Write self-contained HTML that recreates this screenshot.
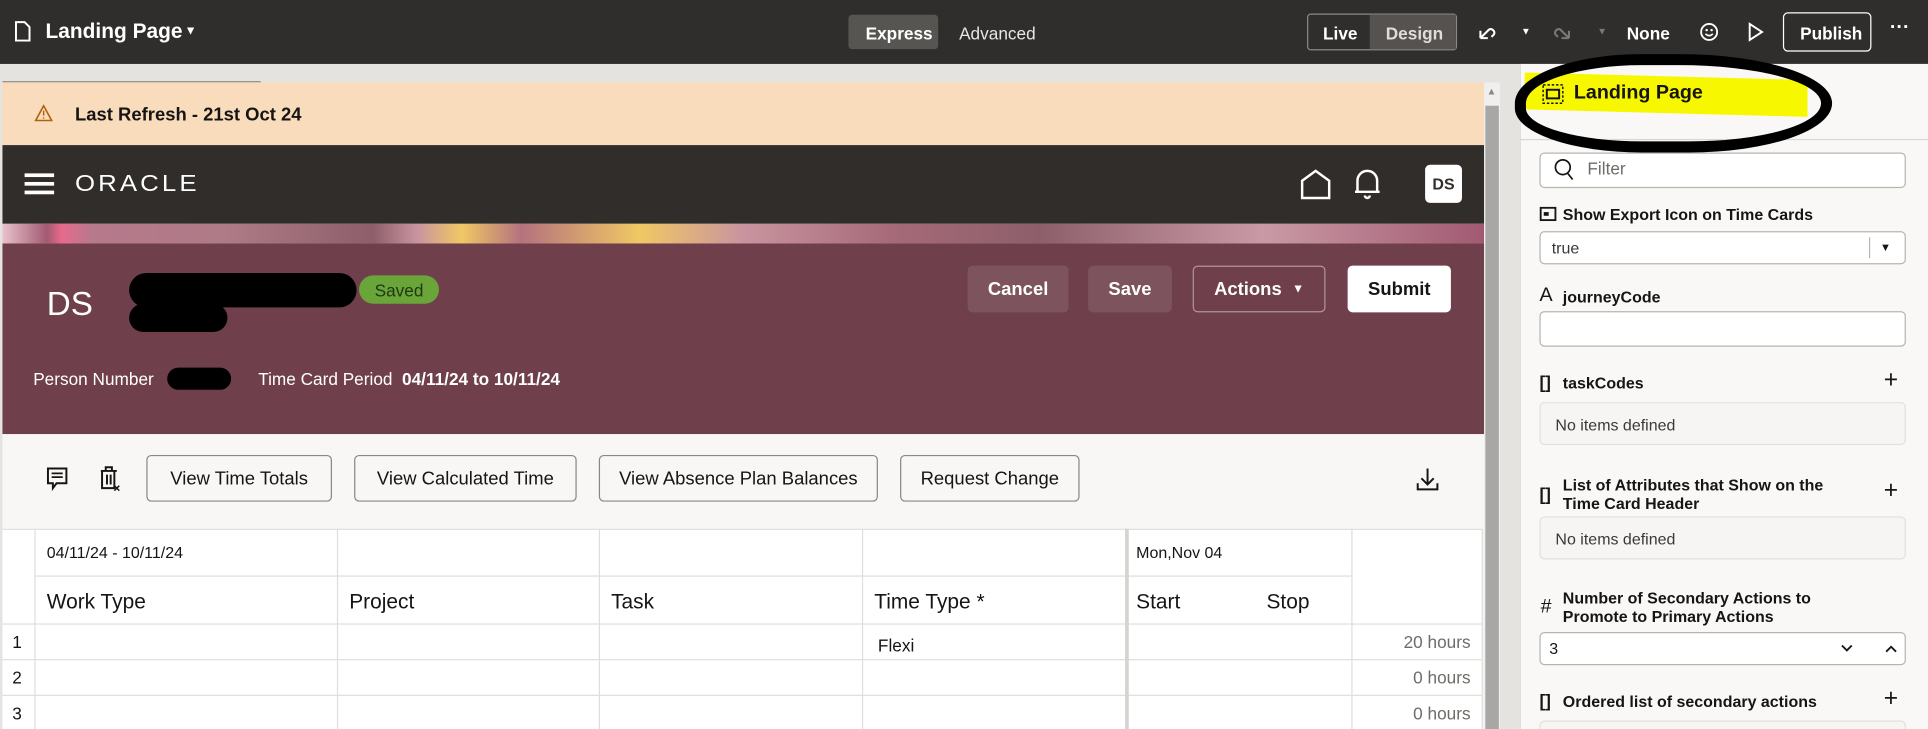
<!DOCTYPE html>
<html><head><meta charset="utf-8"><style>
html,body{margin:0;padding:0;width:1928px;height:729px;overflow:hidden;background:#fff}
#w{position:absolute;left:0;top:0;width:1568px;height:593px;transform:scale(1.22959);transform-origin:0 0;font-family:"Liberation Sans",sans-serif;overflow:hidden;background:#e5e3df}
.a{position:absolute}
.t{position:absolute;white-space:nowrap}
.btn{position:absolute;box-sizing:border-box;border:1px solid #8a8886;border-radius:4px;background:#f8f7f5;font-size:15px;color:#161513;display:flex;align-items:center;justify-content:center}
.vl{position:absolute;top:430px;height:163px;width:1px;background:#e0dedb}
.hl{position:absolute;height:1px;background:#e0dedb}
.lbl{position:absolute;font-size:13px;font-weight:bold;color:#161513;white-space:nowrap}
.box{position:absolute;left:1252px;width:298px;box-sizing:border-box;border:1px solid #b8b5b0;border-radius:4px;background:#fff}
.nob{position:absolute;left:1252px;width:298px;box-sizing:border-box;border:1px solid #e3e1dd;border-radius:4px;background:#f6f5f3;font-size:13px;color:#3b3936;padding:10px 0 0 12px}
.plus{position:absolute;left:1532px;font-size:20px;color:#161513}
</style></head><body><div id="w">
<!-- top bar -->
<div class="a" style="left:0;top:0;width:1568px;height:52px;background:#302e2c"></div>
<svg class="a" style="left:12px;top:17px" width="13" height="17"><path d="M1 1h7l4 4v11H1z" fill="none" stroke="#fff" stroke-width="1.6"/></svg>
<div class="t" style="left:37px;top:16px;font-size:17px;font-weight:bold;color:#fff">Landing Page</div>
<div class="t" style="left:150px;top:20px;font-size:10px;color:#fff">▼</div>
<div class="a" style="left:690px;top:12px;width:73px;height:28px;background:#575552;border-radius:3px"></div>
<div class="t" style="left:704px;top:19px;font-size:14px;font-weight:bold;color:#fff">Express</div>
<div class="t" style="left:780px;top:19px;font-size:14px;color:#e8e6e3">Advanced</div>
<div class="a" style="left:1063px;top:11px;width:122px;height:30px;box-sizing:border-box;border:1px solid #8a8886;border-radius:3px"></div>
<div class="a" style="left:1114px;top:12px;width:70px;height:28px;background:#55524f"></div>
<div class="t" style="left:1076px;top:19px;font-size:14px;font-weight:bold;color:#fff">Live</div>
<div class="t" style="left:1127px;top:19px;font-size:14px;font-weight:bold;color:#e0ddd9">Design</div>
<svg class="a" style="left:1201px;top:18px" width="16" height="16"><path d="M3 13L3 7M3 13h6M3 13L10 6a3 3 0 014 4l-2 2" fill="none" stroke="#fff" stroke-width="1.7"/></svg>
<div class="t" style="left:1237px;top:21px;font-size:8px;color:#fff">▼</div>
<svg class="a" style="left:1263px;top:18px" width="16" height="16"><path d="M13 13V7M13 13H7M13 13L6 6a3 3 0 00-4 4l2 2" fill="none" stroke="#7a7875" stroke-width="1.7"/></svg>
<div class="t" style="left:1299px;top:21px;font-size:8px;color:#7a7875">▼</div>
<div class="t" style="left:1323px;top:19px;font-size:14px;font-weight:bold;color:#fff">None</div>
<svg class="a" style="left:1382px;top:18px" width="16" height="16"><circle cx="8" cy="8" r="6.5" fill="none" stroke="#fff" stroke-width="1.5"/><circle cx="6" cy="6.5" r="1" fill="#fff"/><circle cx="10" cy="6.5" r="1" fill="#fff"/><path d="M5 9.5q3 3 6 0" fill="none" stroke="#fff" stroke-width="1.3"/></svg>
<svg class="a" style="left:1421px;top:18px" width="14" height="16"><path d="M2 1.5L12 8 2 14.5z" fill="none" stroke="#fff" stroke-width="1.6"/></svg>
<div class="a" style="left:1450px;top:10px;width:72px;height:32px;box-sizing:border-box;border:1px solid #fff;border-radius:4px"></div>
<div class="t" style="left:1464px;top:19px;font-size:14px;font-weight:bold;color:#fff">Publish</div>
<div class="t" style="left:1537px;top:14px;font-size:16px;font-weight:bold;color:#fff">···</div>
<!-- canvas -->
<div class="a" style="left:2px;top:67px;width:1205px;height:526px;background:#f8f7f5"></div>
<div class="a" style="left:2px;top:66px;width:210px;height:1px;background:#8a8886"></div>
<div class="a" style="left:2px;top:67px;width:1205px;height:51px;background:#f9dcbb"></div>
<svg class="a" style="left:28px;top:85px" width="15" height="14"><path d="M7.5 1L14 13H1z" fill="none" stroke="#ac630c" stroke-width="1.3"/><path d="M7.5 5v4M7.5 10.5v1" stroke="#ac630c" stroke-width="1.2"/></svg>
<div class="t" style="left:61px;top:85px;font-size:15px;font-weight:bold;color:#161513">Last Refresh - 21st Oct 24</div>
<div class="a" style="left:2px;top:118px;width:1205px;height:64px;background:#312d2a"></div>
<div class="a" style="left:20px;top:141px;width:24px;height:2.5px;background:#fff;box-shadow:0 7px 0 #fff,0 14px 0 #fff"></div>
<div class="t" style="left:61px;top:138px;font-size:21px;color:#fff;letter-spacing:2.5px;transform:scaleY(0.9);transform-origin:0 50%">ORACLE</div>
<svg class="a" style="left:1057px;top:137px" width="26" height="26"><path d="M2 24V10L13 2l11 8v14z" fill="none" stroke="#fff" stroke-width="2"/></svg>
<svg class="a" style="left:1100px;top:136px" width="24" height="27"><path d="M4 20V11a8 8 0 0116 0v9zM2 20h20M10 23a2 2 0 004 0" fill="none" stroke="#fff" stroke-width="2"/></svg>
<div class="a" style="left:1159px;top:134px;width:30px;height:31px;background:#fff;border-radius:4px;font-size:13px;font-weight:bold;color:#312d2a;display:flex;align-items:center;justify-content:center">DS</div>
<div class="a" style="left:2px;top:182px;width:1205px;height:16px;background:linear-gradient(90deg,#e9c2cc 0,#a25a72 3%,#e86a8c 4%,#b7798c 6%,#ae7b86 15%,#8d5f6a 25%,#c9949f 28%,#f0c864 31%,#b5727e 35%,#f0c864 43%,#c9949f 50%,#a66a78 60%,#8d5f6a 70%,#c99aa5 85%,#a25a72 100%)"></div>
<div class="a" style="left:2px;top:198px;width:1205px;height:155px;background:#6f404b"></div>
<div class="t" style="left:38px;top:232px;font-size:27px;color:#fff">DS</div>
<div class="a" style="left:105px;top:222px;width:185px;height:28px;background:#000;border-radius:14px"></div>
<div class="a" style="left:105px;top:247px;width:80px;height:23px;background:#000;border-radius:12px"></div>
<div class="a" style="left:292px;top:224px;width:65px;height:23px;background:#6aa53a;border-radius:12px;font-size:14px;color:#1d3a0f;display:flex;align-items:center;justify-content:center">Saved</div>
<div class="a" style="left:787px;top:216px;width:82px;height:38px;background:#7d545d;border-radius:4px;color:#fff;font-size:15px;font-weight:bold;display:flex;align-items:center;justify-content:center">Cancel</div>
<div class="a" style="left:885px;top:216px;width:68px;height:38px;background:#7d545d;border-radius:4px;color:#fff;font-size:15px;font-weight:bold;display:flex;align-items:center;justify-content:center">Save</div>
<div class="a" style="left:970px;top:216px;width:108px;height:38px;box-sizing:border-box;border:1px solid #b3929a;border-radius:4px;color:#fff;font-size:15px;font-weight:bold;display:flex;align-items:center;justify-content:center">Actions&nbsp;&nbsp;<span style="font-size:10px">▼</span></div>
<div class="a" style="left:1096px;top:216px;width:84px;height:38px;background:#fff;border-radius:4px;color:#161513;font-size:15px;font-weight:bold;display:flex;align-items:center;justify-content:center">Submit</div>
<div class="t" style="left:27px;top:300px;font-size:14px;color:#fff">Person Number</div>
<div class="a" style="left:136px;top:299px;width:52px;height:18px;background:#000;border-radius:9px"></div>
<div class="t" style="left:210px;top:300px;font-size:14px;color:#fff">Time Card Period&nbsp; <b>04/11/24 to 10/11/24</b></div>
<!-- toolbar -->
<svg class="a" style="left:37px;top:379px" width="20" height="21"><path d="M2 2h15v12H9l-3 4v-4H2z" fill="none" stroke="#161513" stroke-width="1.6"/><path d="M5 6h9M5 9h9" stroke="#161513" stroke-width="1.4"/></svg>
<svg class="a" style="left:79px;top:378px" width="20" height="22"><path d="M3 5h13M7 5V2h5v3M4 5v14h10V5M8 8v8M11 8v8" fill="none" stroke="#161513" stroke-width="1.6"/><path d="M14 17l4 4M18 17l-4 4" stroke="#161513" stroke-width="1.2"/></svg>
<div class="btn" style="left:119px;top:370px;width:151px;height:38px">View Time Totals</div>
<div class="btn" style="left:288px;top:370px;width:181px;height:38px">View Calculated Time</div>
<div class="btn" style="left:487px;top:370px;width:227px;height:38px">View Absence Plan Balances</div>
<div class="btn" style="left:732px;top:370px;width:146px;height:38px">Request Change</div>
<svg class="a" style="left:1151px;top:379px" width="20" height="21"><path d="M10 2v13M5 10l5 5 5-5M2 14v5h16v-5" fill="none" stroke="#161513" stroke-width="1.6"/></svg>
<!-- table -->
<div class="a" style="left:2px;top:430px;width:1203px;height:163px;background:#fff"></div>
<div class="hl" style="left:2px;top:430px;width:1203px"></div>
<div class="hl" style="left:28px;top:468px;width:1071px"></div>
<div class="hl" style="left:2px;top:507px;width:1203px"></div>
<div class="hl" style="left:2px;top:536px;width:1203px"></div>
<div class="hl" style="left:2px;top:565px;width:1203px"></div>
<div class="vl" style="left:28px"></div><div class="vl" style="left:274px"></div><div class="vl" style="left:487px"></div><div class="vl" style="left:701px"></div>
<div class="vl" style="left:915px;width:3px;background:#d6d4d0"></div><div class="vl" style="left:1099px"></div><div class="vl" style="left:1205px"></div>
<div class="t" style="left:38px;top:442px;font-size:13px;color:#161513">04/11/24 - 10/11/24</div>
<div class="t" style="left:924px;top:442px;font-size:13px;color:#161513">Mon,Nov 04</div>
<div class="t" style="left:38px;top:480px;font-size:17px;color:#161513">Work Type</div>
<div class="t" style="left:284px;top:480px;font-size:17px;color:#161513">Project</div>
<div class="t" style="left:497px;top:480px;font-size:17px;color:#161513">Task</div>
<div class="t" style="left:711px;top:480px;font-size:17px;color:#161513">Time Type *</div>
<div class="t" style="left:924px;top:480px;font-size:17px;color:#161513">Start</div>
<div class="t" style="left:1030px;top:480px;font-size:17px;color:#161513">Stop</div>
<div class="t" style="left:10px;top:514px;font-size:14px;color:#161513">1</div>
<div class="t" style="left:10px;top:543px;font-size:14px;color:#161513">2</div>
<div class="t" style="left:10px;top:572px;font-size:14px;color:#161513">3</div>
<div class="t" style="left:714px;top:517px;font-size:14px;color:#161513">Flexi</div>
<div class="t" style="right:372px;top:514px;font-size:14px;color:#6f6c68">20 hours</div>
<div class="t" style="right:372px;top:543px;font-size:14px;color:#6f6c68">0 hours</div>
<div class="t" style="right:372px;top:572px;font-size:14px;color:#6f6c68">0 hours</div>
<!-- scrollbar -->
<div class="a" style="left:1207px;top:67px;width:13px;height:526px;background:#f0efed"></div>
<div class="a" style="left:1208px;top:86px;width:11px;height:507px;background:#a8a7a5"></div>
<div class="t" style="left:1209px;top:70px;font-size:8px;color:#888">▲</div>
<!-- right panel -->
<div class="a" style="left:1236px;top:52px;width:332px;height:541px;background:#f9f8f6;border-left:1px solid #e0dedb"></div>
<div class="hl" style="left:1236px;top:113px;width:332px;background:#d9d7d3"></div>
<div class="a" style="left:1240px;top:62px;width:230px;height:30px;background:#f7f700;transform:skewY(1.5deg)"></div>
<div class="a" style="left:1232px;top:44px;width:258px;height:80px;box-sizing:border-box;border:9px solid #000;border-radius:40% 48% 45% 40%/50% 50% 50% 45%"></div>
<svg class="a" style="left:1254px;top:68px" width="18" height="17"><rect x="1" y="1" width="16" height="15" fill="none" stroke="#161513" stroke-width="1.2" stroke-dasharray="2 1.5"/><rect x="4" y="5" width="10" height="7" fill="none" stroke="#161513" stroke-width="1.6"/></svg>
<div class="t" style="left:1280px;top:67px;font-size:16px;font-weight:bold;color:#161513">Landing Page</div>
<div class="box" style="top:124px;height:29px"></div>
<svg class="a" style="left:1263px;top:128px" width="18" height="20"><circle cx="8" cy="8" r="6" fill="none" stroke="#161513" stroke-width="1.4"/><path d="M12 13l4 5" stroke="#161513" stroke-width="1.4"/></svg>
<div class="t" style="left:1291px;top:129px;font-size:14px;color:#6f6c68">Filter</div>
<svg class="a" style="left:1252px;top:168px" width="14" height="12"><rect x="1" y="1" width="12" height="10" fill="none" stroke="#161513" stroke-width="1.5"/><rect x="3.5" y="4.5" width="4" height="3" fill="#161513"/></svg>
<div class="lbl" style="left:1271px;top:167px">Show Export Icon on Time Cards</div>
<div class="box" style="top:188px;height:27px"></div>
<div class="t" style="left:1262px;top:194px;font-size:13px;color:#3b3936">true</div>
<div class="a" style="left:1520px;top:193px;width:1px;height:17px;background:#b8b5b0"></div>
<div class="t" style="left:1529px;top:196px;font-size:9px;color:#161513">▼</div>
<div class="t" style="left:1252px;top:232px;font-size:16px;color:#161513">A</div>
<div class="lbl" style="left:1271px;top:234px">journeyCode</div>
<div class="box" style="top:253px;height:29px"></div>
<div class="lbl" style="left:1252px;top:303px;font-size:14px">[]</div>
<div class="lbl" style="left:1271px;top:304px">taskCodes</div>
<div class="plus" style="top:298px">+</div>
<div class="nob" style="top:327px;height:35px">No items defined</div>
<div class="lbl" style="left:1252px;top:394px;font-size:14px">[]</div>
<div class="lbl" style="left:1271px;top:387px;line-height:15px">List of Attributes that Show on the<br>Time Card Header</div>
<div class="plus" style="top:388px">+</div>
<div class="nob" style="top:420px;height:35px">No items defined</div>
<div class="lbl" style="left:1253px;top:485px;font-size:16px;font-weight:normal">#</div>
<div class="lbl" style="left:1271px;top:479px;line-height:15px">Number of Secondary Actions to<br>Promote to Primary Actions</div>
<div class="box" style="top:514px;height:27px"></div>
<div class="t" style="left:1260px;top:520px;font-size:13px;color:#161513">3</div>
<svg class="a" style="left:1497px;top:523px" width="46" height="10"><path d="M1 2l4 4 4-4M37 7l4-4 4 4" fill="none" stroke="#161513" stroke-width="1.5"/></svg>
<div class="lbl" style="left:1252px;top:562px;font-size:14px">[]</div>
<div class="lbl" style="left:1271px;top:563px">Ordered list of secondary actions</div>
<div class="plus" style="top:557px">+</div>
<div class="nob" style="top:586px;height:35px"></div>
</div></body></html>
